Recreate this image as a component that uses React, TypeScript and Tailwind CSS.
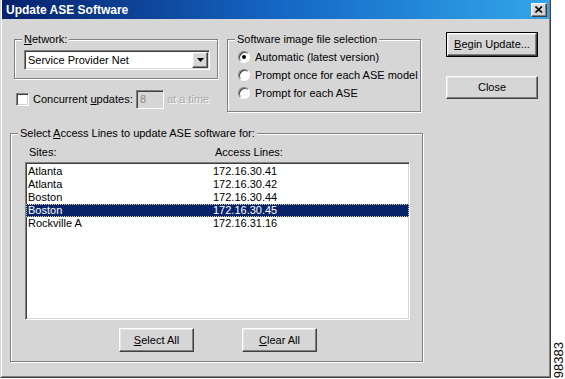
import type { ReactNode } from "react";

const raised =
    "border border-t-white border-l-white border-r-[#404040] border-b-[#404040] shadow-[inset_-1px_-1px_0_#808080,inset_1px_1px_0_#e6e6e6]";
const sunken =
    "border border-t-[#808080] border-l-[#808080] border-r-white border-b-white shadow-[inset_1px_1px_0_#404040,inset_-1px_-1px_0_#d6d6d6]";

function U({ children }: { children: ReactNode }) {
    return <span className="underline underline-offset-[1px]">{children}</span>;
}

function Group({ label, className, children }: { label: ReactNode; className: string; children?: ReactNode }) {
    return (
        <div className={`relative border border-[#808080] shadow-[1px_1px_0_#fff,inset_1px_1px_0_#fff] ${className}`}>
            <span className="absolute left-[7px] -top-[8px] bg-[#d6d6d6] px-[2px] leading-[14px] whitespace-nowrap">
                {label}
            </span>
            {children}
        </div>
    );
}

function Radio({ checked, label }: { checked?: boolean; label: string }) {
    return (
        <div className="flex items-center h-[18px]">
            <div className="w-[12px] h-[12px] rounded-full bg-white border border-t-[#808080] border-l-[#808080] border-r-white border-b-white shadow-[inset_1px_1px_0_#404040] flex items-center justify-center">
                {checked && <div className="w-[4px] h-[4px] rounded-full bg-black" />}
            </div>
            <span className="ml-[5px] leading-[13px]">{label}</span>
        </div>
    );
}

const rows = [
    { site: "Atlanta", line: "172.16.30.41" },
    { site: "Atlanta", line: "172.16.30.42" },
    { site: "Boston", line: "172.16.30.44" },
    { site: "Boston", line: "172.16.30.45", selected: true },
    { site: "Rockville A", line: "172.16.31.16" },
];

export default function App() {
    return (
        <div className="w-[565px] h-[379px] bg-white flex font-['Liberation_Sans',Arial,sans-serif] text-[11px] text-black">
            {/* dialog window */}
            <div className="w-[551px] h-[378px] bg-[#d6d6d6] border-l border-l-[#d6d6d6] border-r border-r-[#404040] border-b border-b-[#404040]">
                <div className="h-full flex flex-col border-l border-l-white border-r border-r-[#808080] border-b border-b-[#808080]">
                    {/* title bar */}
                    <div className="h-[19px] flex items-center bg-linear-to-r from-[#08226c] via-[#1566c4] to-[#33a6ea] pl-[4px] pr-[2px]">
                        <span className="text-white font-bold text-[12px] leading-[14px] flex-1">Update ASE Software</span>
                        <button className={`w-[16px] h-[14px] bg-[#d6d6d6] flex items-center justify-center ${raised}`}>
                            <svg width="8" height="7" viewBox="0 0 8 7">
                                <path d="M0.5 0.5 L7 6.5 M7 0.5 L0.5 6.5" stroke="black" strokeWidth="1.6" />
                            </svg>
                        </button>
                    </div>

                    <div className="flex pl-[8px]">
                        {/* left column */}
                        <div className="w-[414px] mt-[20px] flex flex-col">
                            <div className="flex items-start">
                                <div className="ml-[4px] w-[204px] flex flex-col">
                                    <Group label={<><U>N</U>etwork:</>} className="h-[40px] pl-[9px] pt-[10px]">
                                        <div className={`w-[186px] h-[20px] bg-white flex items-center ${sunken}`}>
                                            <span className="flex-1 pl-[3px] leading-[13px]">Service Provider Net</span>
                                            <div className={`w-[16px] h-[16px] mr-[1px] bg-[#d6d6d6] flex items-center justify-center ${raised}`}>
                                                <svg width="7" height="4" viewBox="0 0 7 4">
                                                    <path d="M0 0 H7 L3.5 4 Z" fill="black" />
                                                </svg>
                                            </div>
                                        </div>
                                    </Group>
                                    <div className="mt-[11px] h-[19px] flex items-center">
                                        <div className={`ml-[2px] w-[13px] h-[13px] bg-white ${sunken}`} />
                                        <span className="ml-[4px] w-[103px] leading-[13px]">
                                            Concurrent <U>u</U>pdates:
                                        </span>
                                        <div className={`w-[28px] h-[19px] flex items-center pl-[3px] text-[#8a8a8a] ${sunken}`}>8</div>
                                        <span className="ml-[3px] text-[#a8a8a8] [text-shadow:1px_1px_0_#fff]">at a time</span>
                                    </div>
                                </div>

                                <Group label="Software image file selection" className="ml-[9px] w-[194px] h-[73px] pl-[10px] pt-[8px]">
                                    <Radio checked label="Automatic (latest version)" />
                                    <Radio label="Prompt once for each ASE model" />
                                    <Radio label="Prompt for each ASE" />
                                </Group>
                            </div>

                            <Group
                                label={<>Select <U>A</U>ccess Lines to update ASE software for:</>}
                                className="mt-[21px] w-[413px] h-[229px] pt-[12px] flex flex-col"
                            >
                                <div className="flex h-[13px] leading-[13px] pl-[18px]">
                                    <span className="w-[186px]">Sites:</span>
                                    <span>Access Lines:</span>
                                </div>
                                <div className={`ml-[14px] mt-[3px] w-[385px] h-[158px] bg-white pt-[2px] ${sunken}`}>
                                    {rows.map((r, i) => (
                                        <div
                                            key={i}
                                            className={`flex h-[13px] leading-[13px] pl-[2px] ${
                                                r.selected ? "bg-[#0a246a] text-white outline outline-dotted outline-[#d8d890] -outline-offset-1" : ""
                                            }`}
                                        >
                                            <span className="w-[185px]">{r.site}</span>
                                            <span>{r.line}</span>
                                        </div>
                                    ))}
                                </div>
                                <div className="flex ml-[108px] mt-[8px] gap-[48px]">
                                    <button className={`w-[75px] h-[24px] bg-[#d6d6d6] ${raised}`}>
                                        <U>S</U>elect All
                                    </button>
                                    <button className={`w-[75px] h-[24px] bg-[#d6d6d6] ${raised}`}>
                                        <U>C</U>lear All
                                    </button>
                                </div>
                            </Group>
                        </div>

                        {/* right column */}
                        <div className="ml-[22px] mt-[13px] w-[92px] flex flex-col">
                            <div className="border border-black">
                                <button className={`w-full h-[23px] bg-[#d6d6d6] ${raised}`}>
                                    <U>B</U>egin Update...
                                </button>
                            </div>
                            <button className={`mt-[19px] w-full h-[23px] bg-[#d6d6d6] ${raised}`}>Close</button>
                        </div>
                    </div>
                </div>
            </div>

            <div className="flex-1 flex items-end pl-[2px] pb-[1px]">
                <span className="[writing-mode:vertical-rl] rotate-180 text-[13px] leading-[12px]">98383</span>
            </div>
        </div>
    );
}
